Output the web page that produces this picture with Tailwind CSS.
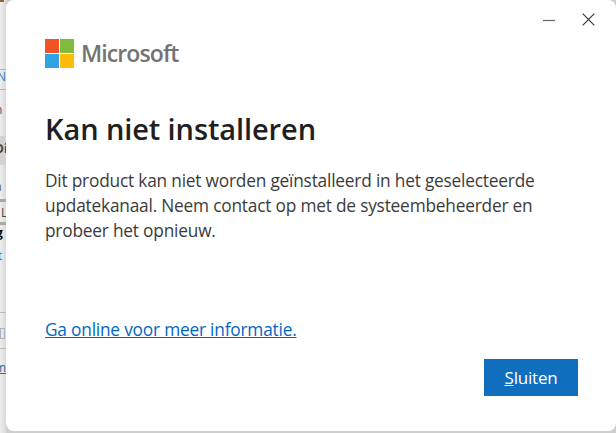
<!DOCTYPE html>
<html lang="nl">
<head>
    <meta charset="UTF-8">
    <title>Kan niet installeren</title>
    <script src="https://cdn.jsdelivr.net/npm/@tailwindcss/browser@4"></script>
</head>
<body class="w-[616px] h-[433px] overflow-hidden bg-[#cfcfcf] font-['Open_Sans',sans-serif]">
    <div class="relative flex w-[616px] h-[433px]">
        <!-- window behind the dialog, only a strip is visible -->
        <div class="w-[6px] h-full shrink-0 bg-gradient-to-r from-[#eeeeee] to-[#d9d9d9] relative overflow-hidden text-[12px] leading-none">
            <div class="absolute left-0 top-0 w-[4px] h-[2px] bg-[#8a6a3a]"></div>
            <div class="absolute left-0 top-[69px] w-full h-px bg-[#b5b5b5]"></div>
            <div class="absolute left-[-3px] top-[71px] text-[#2f7fc4]">N</div>
            <div class="absolute left-0 top-[89px] w-full h-px bg-[#b5b5b5]"></div>
            <div class="absolute left-[-5px] top-[104px] text-[#555]">n</div>
            <div class="absolute left-0 top-[136px] w-full h-[29px] bg-[#d2d2d2]"></div>
            <div class="absolute left-[-5px] top-[143px] font-bold text-[#444]">Di</div>
            <div class="absolute left-[-5px] top-[181px] text-[#555]">a</div>
            <div class="absolute left-0 top-[199px] w-full h-[3px] bg-[#a8a8a8]"></div>
            <div class="absolute left-[1px] top-[207px] text-[#444]">L</div>
            <div class="absolute left-0 top-[222px] w-full h-[3px] bg-[#a8a8a8]"></div>
            <div class="absolute left-[-4px] top-[227px] font-bold text-black">g</div>
            <div class="absolute left-[-2px] top-[250px] text-[#3a7ab0]">t</div>
            <div class="absolute left-0 top-[312px] w-full h-px bg-[#bdbdbd]"></div>
            <div class="absolute left-0 top-[328px] w-[5px] h-[11px] border border-[#aab4bf]"></div>
            <div class="absolute left-0 top-[348px] w-full h-px bg-[#bdbdbd]"></div>
            <div class="absolute left-[-5px] top-[362px] text-[#2f6ca8] underline">m</div>
        </div>

        <!-- dialog -->
        <div class="flex-1 h-[431px] bg-white rounded-[8px] flex flex-col pl-[39px] pr-[38px]">
            <div class="flex justify-end items-center gap-[27px] h-[39px] -mr-[17px] shrink-0">
                <svg width="12" height="12" viewBox="0 0 12 12"><path d="M0 6.5h12" stroke="#666" stroke-width="1.2"/></svg>
                <svg width="13" height="13" viewBox="0 0 13 13"><path d="M.7.7l11.6 11.6M12.3.7L.7 12.3" stroke="#333" stroke-width="1.1"/></svg>
            </div>

            <div class="flex items-center gap-[7px] h-[29px]">
                <svg width="29" height="29" viewBox="0 0 29 29" class="shrink-0">
                    <rect width="14" height="14" fill="#f25325"/>
                    <rect x="15" width="14" height="14" fill="#80bb41"/>
                    <rect y="15" width="14" height="14" fill="#2fa4e3"/>
                    <rect x="15" y="15" width="14" height="14" fill="#ffba0a"/>
                </svg>
                <span class="text-[23px] font-semibold text-[#737373] tracking-[-0.9px] leading-none">Microsoft</span>
            </div>

            <h1 class="mt-[41px] text-[29px] leading-[40px] font-semibold text-[#1f1f1f] tracking-[-0.1px]">Kan niet installeren</h1>

            <p class="mt-[19px] text-[17.3px] leading-[25px] text-[#3b3b3b] tracking-[-0.2px] w-[510px]">Dit product kan niet worden geïnstalleerd in het geselecteerde updatekanaal. Neem contact op met de systeembeheerder en probeer het opnieuw.</p>

            <a href="#" class="mt-[75px] text-[17.3px] leading-[24px] text-[#0067c5] underline tracking-[-0.2px] self-start">Ga online voor meer informatie.</a>

            <div class="flex justify-end mt-[17px]">
                <button class="w-[94px] h-[37px] bg-[#106ebe] text-white text-[17px] tracking-[-0.2px]"><span class="underline">S</span>luiten</button>
            </div>
        </div>
    </div>
</body>
</html>
